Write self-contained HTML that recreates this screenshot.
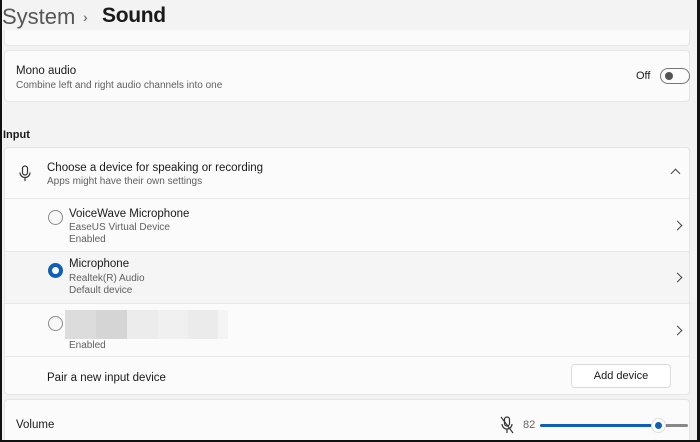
<!DOCTYPE html>
<html><head><style>
*{box-sizing:border-box;margin:0;padding:0}
html,body{width:700px;height:442px;overflow:hidden}
body{background:#f3f3f3;font-family:"Liberation Sans",sans-serif;color:#1a1a1a;position:relative}
.frame{position:absolute;left:0;top:0;width:700px;height:442px;border-left:2px solid #111;border-right:3px solid #111;border-bottom:2px solid #111;pointer-events:none;z-index:9}
.card{position:absolute;left:4px;width:686px;background:#fbfbfb;border:1px solid #e5e5e5;border-radius:4px}
.t{position:absolute;font-size:11.5px;color:#1a1a1a}
.s{position:absolute;font-size:10px;color:#606060}
.chev{position:absolute;right:8px;width:7px;height:7px;border-right:1.3px solid #444;border-top:1.3px solid #444;transform:rotate(45deg)}
.radio{position:absolute;left:43px;width:15px;height:15px;border-radius:50%;border:1px solid #8a8a8a;background:#f8f8f8}
</style></head><body>
<div style="position:absolute;left:2px;top:4px;font-size:22px;color:#555">System</div>
<div style="position:absolute;left:83px;top:9px;font-size:14px;color:#555">›</div>
<div style="position:absolute;left:102px;top:4px;font-size:21px;font-weight:bold;color:#1a1a1a;letter-spacing:-0.3px">Sound</div>
<div class="card" style="top:30px;height:16px;border-top:none;border-radius:0 0 4px 4px"></div>
<div class="card" style="top:50px;height:52px">
 <div class="t" style="left:11px;top:14px">Mono audio</div>
 <div class="s" style="left:11px;top:29px">Combine left and right audio channels into one</div>
 <div class="t" style="left:631px;top:19px;font-size:11px">Off</div>
 <div style="position:absolute;left:655px;top:17px;width:30px;height:16px;border:1px solid #777;border-radius:8px"><div style="position:absolute;left:4px;top:3px;width:8px;height:8px;border-radius:50%;background:#555"></div></div>
</div>
<div style="position:absolute;left:3px;top:129px;font-size:11px;font-weight:bold">Input</div>
<div class="card" style="top:147px;height:248px;overflow:hidden">
 <div style="position:absolute;left:0;top:0;width:100%;height:51px;border-bottom:1px solid #e8e8e8"></div>
 <svg style="position:absolute;left:14px;top:17px" width="12" height="17" viewBox="0 0 12 17" fill="none" stroke="#333" stroke-width="1.2"><rect x="3.5" y="1" width="5" height="9" rx="2.5"/><path d="M1 7.5a5 5 0 0 0 10 0M6 12.5v3.5"/></svg>
 <div class="t" style="left:42px;top:14px">Choose a device for speaking or recording</div>
 <div class="s" style="left:42px;top:28px">Apps might have their own settings</div>
 <div style="position:absolute;right:10px;top:22px;width:7px;height:7px;border-left:1.3px solid #444;border-top:1.3px solid #444;transform:rotate(45deg)"></div>
 <div style="position:absolute;left:0;top:52px;width:100%;height:52px;border-bottom:1px solid #e8e8e8">
  <div class="radio" style="top:10px"></div>
  <div class="t" style="left:64px;top:8px">VoiceWave Microphone</div>
  <div class="s" style="left:64px;top:22px">EaseUS Virtual Device</div>
  <div class="s" style="left:64px;top:34px">Enabled</div>
  <div class="chev" style="top:22px"></div>
 </div>
 <div style="position:absolute;left:0;top:104px;width:100%;height:52px;background:#f5f5f5;border-bottom:1px solid #e8e8e8">
  <div class="radio" style="top:11px;border:4px solid #0d5fb8;background:#fff"></div>
  <div class="t" style="left:64px;top:6px">Microphone</div>
  <div class="s" style="left:64px;top:21px">Realtek(R) Audio</div>
  <div class="s" style="left:64px;top:33px">Default device</div>
  <div class="chev" style="top:22px"></div>
 </div>
 <div style="position:absolute;left:0;top:157px;width:100%;height:52px;border-bottom:1px solid #e8e8e8">
  <div class="radio" style="top:11px"></div>
  <div style="position:absolute;left:60px;top:5px;width:31px;height:29px;background:#dcdcdc"></div>
  <div style="position:absolute;left:91px;top:5px;width:31px;height:29px;background:#d5d5d5"></div>
  <div style="position:absolute;left:122px;top:5px;width:31px;height:29px;background:#ececec"></div>
  <div style="position:absolute;left:153px;top:5px;width:30px;height:29px;background:#f0f0f0"></div>
  <div style="position:absolute;left:183px;top:5px;width:30px;height:29px;background:#ebebeb"></div>
  <div style="position:absolute;left:213px;top:5px;width:10px;height:29px;background:#f4f4f4"></div>
  <div class="s" style="left:64px;top:35px">Enabled</div>
  <div class="chev" style="top:22px"></div>
 </div>
 <div class="t" style="left:42px;top:224px">Pair a new input device</div>
 <div style="position:absolute;left:566px;top:216px;width:100px;height:24px;background:#fff;border:1px solid #dcdcdc;border-radius:4px;font-size:11px;text-align:center;line-height:22px">Add device</div>
</div>
<div class="card" style="top:399px;height:50px">
 <div class="t" style="left:11px;top:19px">Volume</div>
 <svg style="position:absolute;left:495px;top:16px" width="14" height="18" viewBox="0 0 14 18" fill="none" stroke="#333" stroke-width="1.2"><rect x="4.5" y="1" width="5" height="9" rx="2.5"/><path d="M2 8a5 5 0 0 0 10 0M7 13v4M1 1l12 16"/></svg>
 <div style="position:absolute;left:518px;top:19px;font-size:11px;color:#666">82</div>
 <div style="position:absolute;left:535px;top:24px;width:118px;height:3px;background:#0d5fb8;border-radius:2px"></div>
 <div style="position:absolute;left:656px;top:24px;width:27px;height:3px;background:#888;border-radius:2px"></div>
 <div style="position:absolute;left:646px;top:18px;width:15px;height:15px;border-radius:50%;background:#fff;border:1px solid #ddd"><div style="position:absolute;left:3px;top:3px;width:7px;height:7px;border-radius:50%;background:#0d5fb8"></div></div>
</div>
<div class="frame"></div>
</body></html>
